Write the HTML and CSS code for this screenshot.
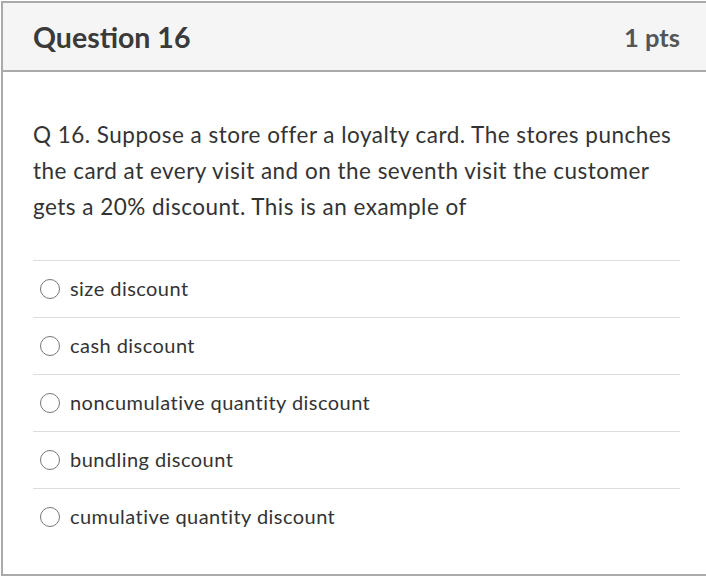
FILE: index.html
```html
<!DOCTYPE html>
<html>
<head>
<meta charset="utf-8">
<link rel="stylesheet" href="styles.css">
</head>
<body>
<div class="card">
  <div class="card-header">
    <h2 class="title">Question 16</h2>
    <span class="pts">1 pts</span>
  </div>
  <div class="card-body">
    <p class="question">Q 16. Suppose a store offer a loyalty card. The stores punches the card at every visit and on the seventh visit the customer gets a 20% discount. This is an example of</p>
    <div class="answers">
      <label class="answer"><span class="radio"></span><span class="label">size discount</span></label>
      <label class="answer"><span class="radio"></span><span class="label">cash discount</span></label>
      <label class="answer"><span class="radio"></span><span class="label">noncumulative quantity discount</span></label>
      <label class="answer"><span class="radio"></span><span class="label">bundling discount</span></label>
      <label class="answer"><span class="radio"></span><span class="label">cumulative quantity discount</span></label>
    </div>
  </div>
</div>
</body>
</html>
```
FILE: styles.css
```css
html, body {
  margin: 0;
  padding: 0;
  background: #fff;
  overflow: hidden;
}
body {
  font-family: Lato, "Open Sans", sans-serif;
  color: #2d3b45;
}
.card {
  margin: 1px 0 0 1px;
  border: 2px solid #aaaaaa;
  border-right: none;
  width: 705px;
  height: 575px;
  box-sizing: border-box;
}
.card-header {
  display: flex;
  align-items: center;
  justify-content: space-between;
  height: 67px;
  background: #f5f5f5;
  border-bottom: 2px solid #aaaaaa;
  padding: 0 26px 0 30px;
}
.title {
  margin: 0;
  font-size: 28.5px;
  font-weight: 700;
  color: #3a3a3a;
}
.pts {
  font-size: 25.5px;
  font-weight: 700;
  color: #555;
}
.card-body {
  padding: 45px 26px 0 30px;
}
.question {
  margin: 0 0 35px 0;
  font-size: 22.5px;
  letter-spacing: 0.48px;
  line-height: 36px;
  color: #333;
}
.answers {
  display: flex;
  flex-direction: column;
}
.answer {
  display: flex;
  align-items: center;
  height: 56px;
  border-top: 1px solid #dddddd;
  padding-left: 7px;
}
.radio {
  width: 18px;
  height: 18px;
  border: 1px solid #777;
  border-radius: 50%;
  background: #fff;
  flex: none;
}
.label {
  margin-left: 10px;
  font-size: 20px;
  letter-spacing: 0.45px;
  color: #333;
  position: relative;
  top: -1px;
}
```
